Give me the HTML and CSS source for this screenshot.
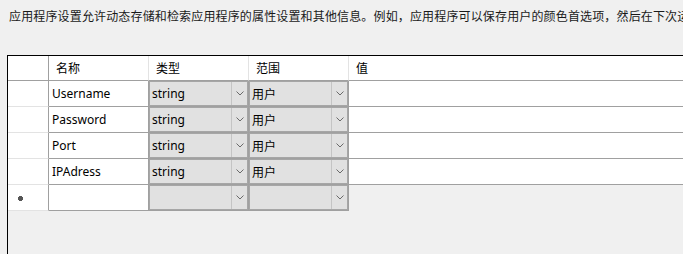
FILE: index.html
```html
<!DOCTYPE html>
<html lang="zh-CN">
<head>
<meta charset="utf-8">
<title>Settings</title>
<link rel="stylesheet" href="styles.css">
</head>
<body>
<div class="desc">应用程序设置允许动态存储和检索应用程序的属性设置和其他信息。例如，应用程序可以保存用户的颜色首选项，然后在下次运</div>
<div class="grid">
  <div class="row head">
    <div class="cell rh"></div>
    <div class="cell hc">名称</div>
    <div class="cell hc">类型</div>
    <div class="cell hc">范围</div>
    <div class="cell hc last">值</div>
  </div>
  <div class="row">
    <div class="cell rh"></div>
    <div class="cell name">Username</div>
    <div class="cell combo"><span class="ct">string</span><span class="btn"><svg width="8" height="5" viewBox="0 0 8 5"><polyline points="0.5,0.5 4,4 7.5,0.5" fill="none" stroke="#6a6a6a" stroke-width="1"/></svg></span></div>
    <div class="cell combo"><span class="ct">用户</span><span class="btn"><svg width="8" height="5" viewBox="0 0 8 5"><polyline points="0.5,0.5 4,4 7.5,0.5" fill="none" stroke="#6a6a6a" stroke-width="1"/></svg></span></div>
    <div class="cell val"></div>
  </div>
  <div class="row">
    <div class="cell rh"></div>
    <div class="cell name">Password</div>
    <div class="cell combo"><span class="ct">string</span><span class="btn"><svg width="8" height="5" viewBox="0 0 8 5"><polyline points="0.5,0.5 4,4 7.5,0.5" fill="none" stroke="#6a6a6a" stroke-width="1"/></svg></span></div>
    <div class="cell combo"><span class="ct">用户</span><span class="btn"><svg width="8" height="5" viewBox="0 0 8 5"><polyline points="0.5,0.5 4,4 7.5,0.5" fill="none" stroke="#6a6a6a" stroke-width="1"/></svg></span></div>
    <div class="cell val"></div>
  </div>
  <div class="row">
    <div class="cell rh"></div>
    <div class="cell name">Port</div>
    <div class="cell combo"><span class="ct">string</span><span class="btn"><svg width="8" height="5" viewBox="0 0 8 5"><polyline points="0.5,0.5 4,4 7.5,0.5" fill="none" stroke="#6a6a6a" stroke-width="1"/></svg></span></div>
    <div class="cell combo"><span class="ct">用户</span><span class="btn"><svg width="8" height="5" viewBox="0 0 8 5"><polyline points="0.5,0.5 4,4 7.5,0.5" fill="none" stroke="#6a6a6a" stroke-width="1"/></svg></span></div>
    <div class="cell val"></div>
  </div>
  <div class="row">
    <div class="cell rh"></div>
    <div class="cell name">IPAdress</div>
    <div class="cell combo"><span class="ct">string</span><span class="btn"><svg width="8" height="5" viewBox="0 0 8 5"><polyline points="0.5,0.5 4,4 7.5,0.5" fill="none" stroke="#6a6a6a" stroke-width="1"/></svg></span></div>
    <div class="cell combo"><span class="ct">用户</span><span class="btn"><svg width="8" height="5" viewBox="0 0 8 5"><polyline points="0.5,0.5 4,4 7.5,0.5" fill="none" stroke="#6a6a6a" stroke-width="1"/></svg></span></div>
    <div class="cell val"></div>
  </div>
  <div class="row newrow">
    <div class="cell rh"><svg class="star" width="5" height="5" viewBox="0 0 5 5"><rect x="1" y="0" width="3" height="5" fill="#555"/><rect x="0" y="1" width="5" height="3" fill="#555"/></svg></div>
    <div class="cell name"></div>
    <div class="cell combo"><span class="ct"></span><span class="btn"><svg width="8" height="5" viewBox="0 0 8 5"><polyline points="0.5,0.5 4,4 7.5,0.5" fill="none" stroke="#6a6a6a" stroke-width="1"/></svg></span></div>
    <div class="cell combo"><span class="ct"></span><span class="btn"><svg width="8" height="5" viewBox="0 0 8 5"><polyline points="0.5,0.5 4,4 7.5,0.5" fill="none" stroke="#6a6a6a" stroke-width="1"/></svg></span></div>
    <div class="cell blank"></div>
  </div>
</div>
</body>
</html>
```

FILE: styles.css
```css
html, body {
  margin: 0;
  padding: 0;
  background: #f0f0f0;
  overflow: hidden;
}
body {
  width: 683px;
  height: 254px;
  font-family: "Noto Sans", "Noto Sans CJK SC", sans-serif;
  font-size: 12px;
  color: #000;
}
.desc {
  font-family: "Noto Sans CJK SC", sans-serif;
  font-size: 12px;
  line-height: 20px;
  letter-spacing: 0.15px;
  padding: 6px 0 0 9px;
  height: 20px;
  white-space: nowrap;
  overflow: hidden;
  color: #1a1a1a;
}
.grid {
  margin: 29px 0 0 7px;
  border-left: 1px solid #000;
  border-top: 1px solid #000;
  height: 199px;
  box-sizing: border-box;
}
.row {
  display: grid;
  grid-template-columns: 41px 100px 100px 100px 1fr;
  height: 26px;
}
.row.head {
  height: 25px;
}
.cell {
  box-sizing: border-box;
  background: #fff;
  border-right: 1px solid #a0a0a0;
  border-bottom: 1px solid #a0a0a0;
  display: flex;
  align-items: center;
  white-space: nowrap;
  overflow: hidden;
}
.rh {
  border-bottom-color: #e3e3e3;
  border-right-color: #a0a0a0;
  justify-content: flex-start;
}
.head .rh {
  border-bottom-color: #a0a0a0;
}
.hc {
  font-family: "Noto Sans CJK SC", sans-serif;
  padding-left: 7px;
  border-right-color: #e3e3e3;
  padding-bottom: 1px;
}
.hc.last {
  border-right: none;
}
.name {
  padding-left: 3px;
}
.combo {
  background: #e1e1e1;
  box-shadow: inset 0 0 0 1px #a6a6a6;
  padding: 0;
}
.combo .ct {
  flex: 1;
  padding-left: 3px;
  font-family: "Noto Sans", "Noto Sans CJK SC", sans-serif;
}
.combo .btn {
  width: 15px;
  align-self: stretch;
  margin: 1px 1px 1px 0;
  border-left: 1px solid #c4c4c4;
  display: flex;
  align-items: center;
  justify-content: center;
}
.val {
  border-right: none;
}
.blank {
  background: #f0f0f0;
  border-right: none;
  border-bottom: none;
}
.star {
  margin-left: 10px;
  margin-top: 2px;
}
```
